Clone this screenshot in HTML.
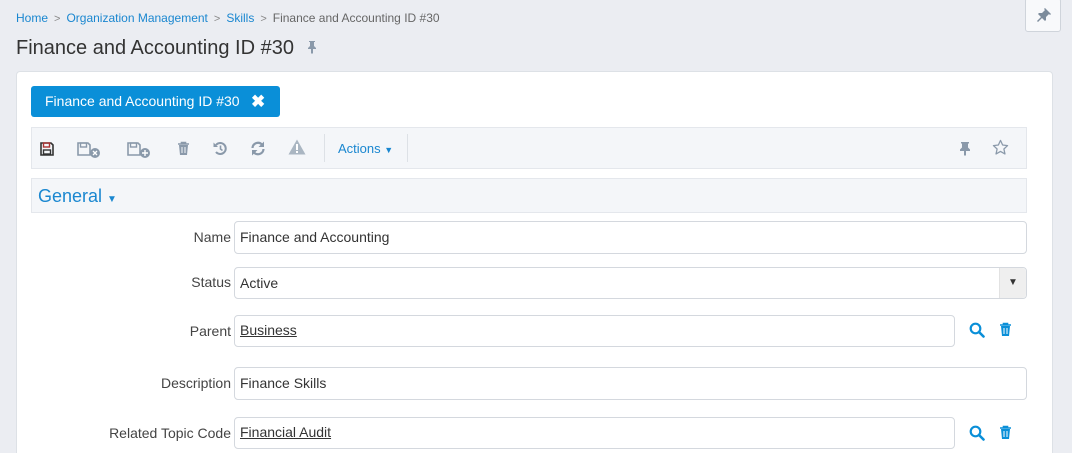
<!DOCTYPE html>
<html style="overflow:hidden;height:453px"><head><style>
*{box-sizing:border-box;margin:0;padding:0}
body{width:1072px;height:453px;overflow:hidden;background:#ebedf2;font-family:"Liberation Sans",sans-serif;position:relative;color:#333}
.abs{position:absolute}
.bc{left:16px;top:11px;font-size:12px;color:#666}
.bc a{color:#1a87d0;text-decoration:none}
.bc .s{color:#888;margin:0 6px;font-size:11px}
h1{position:absolute;left:16px;top:37px;font-size:20px;font-weight:normal;color:#333}
.pinbtn{left:1025px;top:-2px;width:36px;height:34px;background:#f8f9fb;border:1px solid #cfd4db;border-radius:3px}
.card{left:16px;top:71px;width:1037px;height:382px;background:#fff;border:1px solid #dde1e6;border-bottom:none;border-radius:4px 4px 0 0}
.tab{left:31px;top:86px;width:249px;height:31px;background:#0a8fd8;border-radius:3px;color:#fff;font-size:14px;line-height:31px;padding-left:14px}
.tb{left:31px;top:127px;width:996px;height:42px;background:#f4f6f9;border:1px solid #e4e7ec}
.tb svg{position:absolute}
.sep{position:absolute;top:6px;width:1px;height:28px;background:#dde1e6}
.gen{left:31px;top:178px;width:996px;height:35px;background:#f4f6f9;border:1px solid #e4e7ec;color:#1a87d0;font-size:18px;line-height:34px;padding-left:6px}
.lbl{position:absolute;right:841px;font-size:14px;color:#444;text-align:right;white-space:nowrap}
.inp{position:absolute;left:234px;border:1px solid #d4d8de;border-radius:4px;font-size:14px;color:#333;padding-left:5px;background:#fff}
.inp u{color:#333}
</style></head><body>
<div class="abs bc"><a>Home</a><span class="s">&gt;</span><a>Organization Management</a><span class="s">&gt;</span><a>Skills</a><span class="s">&gt;</span>Finance and Accounting ID #30</div>
<h1>Finance and Accounting ID #30 <svg width="12" height="14" viewBox="0 0 12 14" style="margin-left:6px"><path d="M3 1h6v1h-1v4l2 2v1H7v4l-1 1-1-1V9H2V8l2-2V2H3z" fill="#8a99aa"/></svg></h1>
<div class="abs pinbtn"><svg width="16" height="16" viewBox="0 0 16 16" style="position:absolute;left:10px;top:8px"><path d="M9 1l6 6-1 1-1-1-3 3v3l-1 1-3-3-4 4-1-1 4-4-3-3 1-1h3l3-3-1-1z" fill="#7d8c9c"/></svg></div>
<div class="abs card"></div>
<div class="abs tab">Finance and Accounting ID #30 <span style="position:absolute;left:220px;top:0;font-size:17px;font-weight:bold">✖</span></div>
<div class="abs tb">
<svg style="left:8px;top:14px" width="14" height="14" viewBox="0 0 14 14"><path d="M1 1h10l2 2v10H1z" fill="none" stroke="#333" stroke-width="1.6"/><rect x="3.5" y="1" width="6" height="4" fill="none" stroke="#a33" stroke-width="1.4"/><rect x="3.5" y="8" width="7" height="4" fill="none" stroke="#333" stroke-width="1.4"/></svg>
<svg style="left:45px;top:14px" width="26" height="16" viewBox="0 0 26 16"><path d="M1 1h10l2 2v10H1z" fill="none" stroke="#8a99aa" stroke-width="1.6"/><rect x="3.5" y="1" width="6" height="4" fill="none" stroke="#8a99aa" stroke-width="1.4"/><circle cx="18" cy="11" r="5" fill="#8a99aa"/><path d="M16 9l4 4M20 9l-4 4" stroke="#fff" stroke-width="1.3"/></svg>
<svg style="left:95px;top:14px" width="26" height="16" viewBox="0 0 26 16"><path d="M1 1h10l2 2v10H1z" fill="none" stroke="#8a99aa" stroke-width="1.6"/><rect x="3.5" y="1" width="6" height="4" fill="none" stroke="#8a99aa" stroke-width="1.4"/><circle cx="18" cy="11" r="5" fill="#8a99aa"/><path d="M18 8v6M15 11h6" stroke="#fff" stroke-width="1.4"/></svg>
<svg style="left:145px;top:13px" width="13" height="15" viewBox="0 0 13 15"><path d="M1 3h11M4.5 3V1.5h4V3" stroke="#8a99aa" stroke-width="1.6" fill="none"/><path d="M2 4h9l-1 10H3z" fill="#8a99aa"/><path d="M5 6v6M8 6v6" stroke="#f4f6f9" stroke-width="1"/></svg>
<svg style="left:181px;top:13px" width="15" height="15" viewBox="0 0 15 15"><path d="M3 4A5.5 5.5 0 1 1 3 11" fill="none" stroke="#8a99aa" stroke-width="2"/><path d="M0.5 1.5L5 6H0.5z" fill="#8a99aa"/><path d="M7.5 4.5V8l2 1.5" stroke="#8a99aa" stroke-width="1.6" fill="none"/></svg>
<svg style="left:218px;top:13px" width="16" height="15" viewBox="0 0 16 15"><path d="M2.5 7A5.5 5.5 0 0 1 12 3.5M13.5 8A5.5 5.5 0 0 1 4 11.5" fill="none" stroke="#8a99aa" stroke-width="2.2"/><path d="M14 0.5V6H8.5zM2 14.5V9h5.5z" fill="#8a99aa"/></svg>
<svg style="left:256px;top:11px" width="18" height="16" viewBox="0 0 18 16"><path d="M9 0.5L17.5 15.5H0.5z" fill="#aab6c2"/><rect x="8" y="5" width="2" height="6" fill="#fff"/><rect x="8" y="12" width="2" height="2" fill="#fff"/></svg>
<div class="sep" style="left:292px"></div>
<div style="position:absolute;left:306px;top:13px;font-size:13px;color:#1a87d0">Actions <span style="font-size:9px">▼</span></div>
<div class="sep" style="left:375px"></div>
<svg style="left:927px;top:13px" width="12" height="15" viewBox="0 0 12 15"><path d="M2 1h8v1.5H9v4l2 2V10H7v4l-1 1-1-1v-4H1V8.5l2-2v-4H2z" fill="#8a99aa"/></svg>
<svg style="left:960px;top:11px" width="17" height="17" viewBox="0 0 24 24"><path d="M12 2l3 6.5 7 .8-5.2 4.8 1.5 7L12 17.5 5.7 21.1l1.5-7L2 9.3l7-.8z" fill="none" stroke="#8a99aa" stroke-width="1.8" stroke-linejoin="round"/></svg>
</div>
<div class="abs gen">General <span style="font-size:10px">▼</span></div>

<div class="lbl" style="top:229px">Name</div>
<div class="inp" style="top:221px;width:793px;height:33px;line-height:31px">Finance and Accounting</div>
<div class="lbl" style="top:274px">Status</div>
<div class="inp" style="top:267px;width:793px;height:32px;line-height:30px">Active<div style="position:absolute;right:0;top:0;width:27px;height:30px;background:#efefef;border-left:1px solid #e2e2e2;border-radius:0 4px 4px 0;font-size:10px;text-align:center;color:#333">▼</div></div>
<div class="lbl" style="top:323px">Parent</div>
<div class="inp" style="top:315px;width:721px;height:32px;line-height:28px"><u>Business</u></div>
<div class="lbl" style="top:375px">Description</div>
<div class="inp" style="top:367px;width:793px;height:33px;line-height:31px">Finance Skills</div>
<div class="lbl" style="top:425px">Related Topic Code</div>
<div class="inp" style="top:417px;width:721px;height:32px;line-height:28px"><u>Financial Audit</u></div>

<svg class="abs" style="left:969px;top:322px" width="16" height="16" viewBox="0 0 16 16"><circle cx="6.5" cy="6.5" r="4.8" fill="none" stroke="#0a8fd8" stroke-width="2.2"/><path d="M10 10l4.5 4.5" stroke="#0a8fd8" stroke-width="2.6" stroke-linecap="round"/></svg>
<svg class="abs" style="left:999px;top:322px" width="13" height="15" viewBox="0 0 13 15"><path d="M1 3h11M4.5 3V1.5h4V3" stroke="#0a8fd8" stroke-width="1.6" fill="none"/><path d="M2 4h9l-1 10H3z" fill="#0a8fd8"/><path d="M5 6v6M8 6v6" stroke="#fff" stroke-width="1"/></svg>
<svg class="abs" style="left:969px;top:425px" width="16" height="16" viewBox="0 0 16 16"><circle cx="6.5" cy="6.5" r="4.8" fill="none" stroke="#0a8fd8" stroke-width="2.2"/><path d="M10 10l4.5 4.5" stroke="#0a8fd8" stroke-width="2.6" stroke-linecap="round"/></svg>
<svg class="abs" style="left:999px;top:425px" width="13" height="15" viewBox="0 0 13 15"><path d="M1 3h11M4.5 3V1.5h4V3" stroke="#0a8fd8" stroke-width="1.6" fill="none"/><path d="M2 4h9l-1 10H3z" fill="#0a8fd8"/><path d="M5 6v6M8 6v6" stroke="#fff" stroke-width="1"/></svg>
</body></html>
